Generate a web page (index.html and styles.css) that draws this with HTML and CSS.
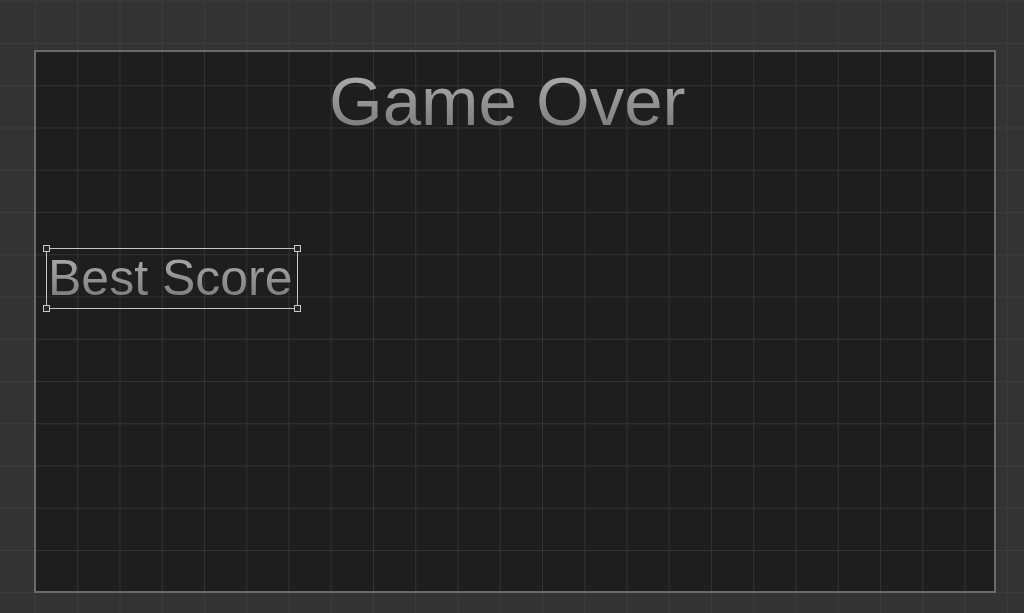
FILE: index.html
```html
<!DOCTYPE html>
<html>
<head>
<meta charset="utf-8">
<link rel="stylesheet" href="styles.css">
</head>
<body>
<div class="scene">
  <div class="canvas">
    <div class="title">Game Over</div>
    <div class="label selected">
      <span class="label-text">Best Score</span>
      <i class="handle tl"></i><i class="handle tr"></i><i class="handle bl"></i><i class="handle br"></i>
    </div>
  </div>
</div>
</body>
</html>
```
FILE: styles.css
```css
html, body {
  margin: 0;
  padding: 0;
  width: 1024px;
  height: 613px;
  overflow: hidden;
}
body {
  background-color: #333333;
  background-image:
    linear-gradient(to right, #3d3d3d 0, #3d3d3d 1px, transparent 1px),
    linear-gradient(to bottom, #3d3d3d 0, #3d3d3d 1px, transparent 1px);
  background-size: 42.25px 42.25px;
  background-position: -7.25px 0.75px;
  background-attachment: fixed;
  font-family: "Liberation Sans", Arial, sans-serif;
}
.scene {
  padding: 50px 0 0 34px;
}
.canvas {
  box-sizing: border-box;
  width: 962px;
  height: 543px;
  border: 2px solid #6a6a6a;
  background-color: #1e1e1e;
  background-image:
    linear-gradient(to right, #333333 0, #333333 1px, transparent 1px),
    linear-gradient(to bottom, #333333 0, #333333 1px, transparent 1px);
  background-size: 42.25px 42.25px;
  background-position: -7.25px 0.75px;
  background-attachment: fixed;
  display: flex;
  flex-direction: column;
  align-items: flex-start;
}
.title {
  margin: 15px 0 0 293px;
  font-size: 69px;
  line-height: 69px;
  background: linear-gradient(to bottom, #a6a6a6 20%, #7c7c7c 90%);
  -webkit-background-clip: text;
  background-clip: text;
  color: transparent;
  white-space: nowrap;
  text-shadow: none;
}
.label {
  position: relative;
  box-sizing: border-box;
  margin: 112px 0 0 10px;
  width: 252px;
  height: 61px;
  border: 1px solid #c4c4c4;
}
.label-text {
  display: block;
  font-size: 50px;
  line-height: 58px;
  margin-left: 1px;
  background: linear-gradient(to bottom, #a3a3a3 25%, #7a7a7a 90%);
  -webkit-background-clip: text;
  background-clip: text;
  color: transparent;
  white-space: nowrap;
}
.handle {
  position: absolute;
  box-sizing: border-box;
  width: 7px;
  height: 7px;
  border: 1px solid #c8c8c8;
  background: #262626;
}
.handle.tl { left: -4px; top: -4px; }
.handle.tr { right: -4px; top: -4px; }
.handle.bl { left: -4px; bottom: -4px; }
.handle.br { right: -4px; bottom: -4px; }
```
